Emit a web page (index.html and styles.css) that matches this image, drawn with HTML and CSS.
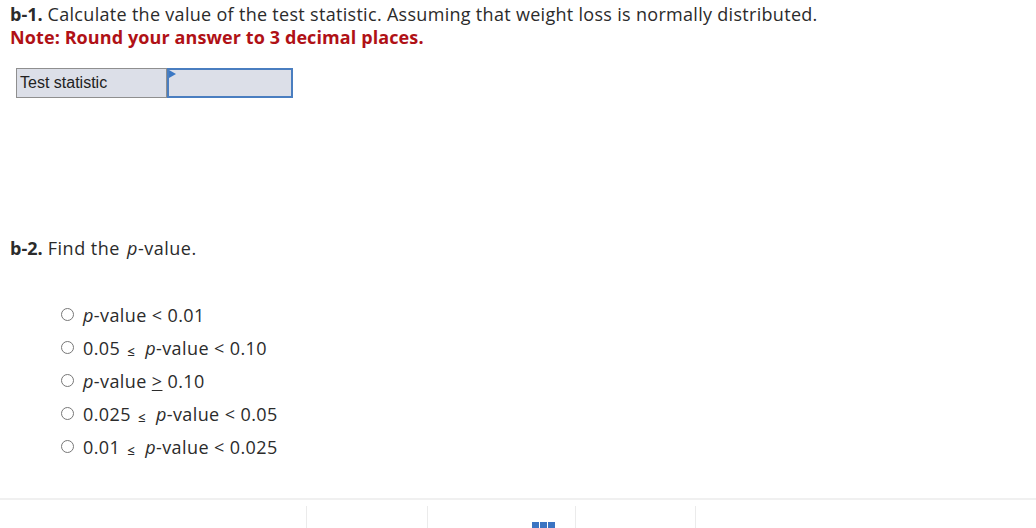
FILE: index.html
```html
<!DOCTYPE html>
<html>
<head>
<meta charset="utf-8">
<link rel="stylesheet" href="styles.css">
</head>
<body>
<div class="page">
  <section class="part">
    <p class="q"><b>b-1.</b> Calculate the value of the test statistic. Assuming that weight loss is normally distributed.</p>
    <p class="note">Note: Round your answer to 3 decimal places.</p>
    <div class="answer">
      <div class="label">Test statistic</div>
      <div class="input"><span class="flag"></span></div>
    </div>
  </section>
  <section class="part part2">
    <p class="q q2"><b>b-2.</b> Find the <i>p</i>-value.</p>
    <ul class="options">
      <li><span class="radio"></span><span><i>p</i>-value &lt; 0.01</span></li>
      <li><span class="radio"></span><span>0.05 <span class="le">≤</span> <i>p</i>-value &lt; 0.10</span></li>
      <li><span class="radio"></span><span><i>p</i>-value <span class="ge">&gt;</span> 0.10</span></li>
      <li><span class="radio"></span><span>0.025 <span class="le">≤</span> <i>p</i>-value &lt; 0.05</span></li>
      <li><span class="radio"></span><span>0.01 <span class="le">≤</span> <i>p</i>-value &lt; 0.025</span></li>
    </ul>
  </section>
  <footer class="toolbar">
    <div class="seg s1"></div>
    <div class="seg s2"></div>
    <div class="seg s3"><span class="grid"><i></i><i></i><i></i></span></div>
    <div class="seg s4"></div>
    <div class="seg s5"></div>
  </footer>
</div>
</body>
</html>
```
FILE: styles.css
```css
html, body { margin: 0; padding: 0; background: #fff; }
body { font-family: "Open Sans", "Lato", sans-serif; color: #2b2b2b; }
.page { width: 1036px; height: 528px; overflow: hidden; }
.part { padding: 0 0 0 10px; }
p { margin: 0; }
.q { font-size: 18px; line-height: 24px; padding-top: 2px; letter-spacing: 0.3px; }
.q b { font-weight: 700; letter-spacing: 0; }
.q2 { letter-spacing: 0.5px; }
.q2 i { margin-left: 2px; }
.note { color: #b01116; font-weight: 700; font-size: 18px; line-height: 22px; letter-spacing: 0.1px; }
.answer { display: flex; margin: 20px 0 0 6px; }
.label { width: 146px; height: 28px; background: #dcdfe8; border: 1px solid #8f8f8f;
  font-family: "Liberation Sans", Arial, sans-serif; font-size: 16px; line-height: 28px; padding-left: 3px; color: #222; letter-spacing: 0; }
.input { position: relative; width: 122px; height: 26px; background: #dcdfe8; border: 2px solid #4a7ec0; }
.flag { position: absolute; left: 0; top: 0; width: 0; height: 0; border-top: 4px solid transparent; border-bottom: 4px solid transparent; border-left: 7px solid #3b78c4; }
.part2 { margin-top: 136px; }
.options { list-style: none; margin: 38px 0 0 51px; padding: 0; }
.options li { display: flex; align-items: center; height: 33px; font-size: 18px; letter-spacing: 0.4px; }
.radio { width: 13px; height: 13px; border: 1px solid #777; border-radius: 50%; margin-right: 9px; box-sizing: border-box; flex: none; }
.le { font-size: 13px; display: inline-block; vertical-align: -1px; margin: 0 5px 0 2px; font-weight: 600; }
.ge { text-decoration: underline; text-underline-offset: 2px; }
.toolbar { margin-top: 35px; border-top: 2px solid #f0f0f0; display: flex; height: 30px; padding-top: 6px; }
.seg { border-right: 1px solid #ebebeb; height: 30px; }
.s1 { width: 306px; }
.s2 { width: 120px; }
.s3 { width: 147px; position: relative; }
.s4 { width: 119px; }
.s5 { width: 0; border: none; }
.grid { position: absolute; left: 104px; top: 16px; display: flex; gap: 1px; }
.grid i { width: 7px; height: 8px; background: #3b74c2; }
```
